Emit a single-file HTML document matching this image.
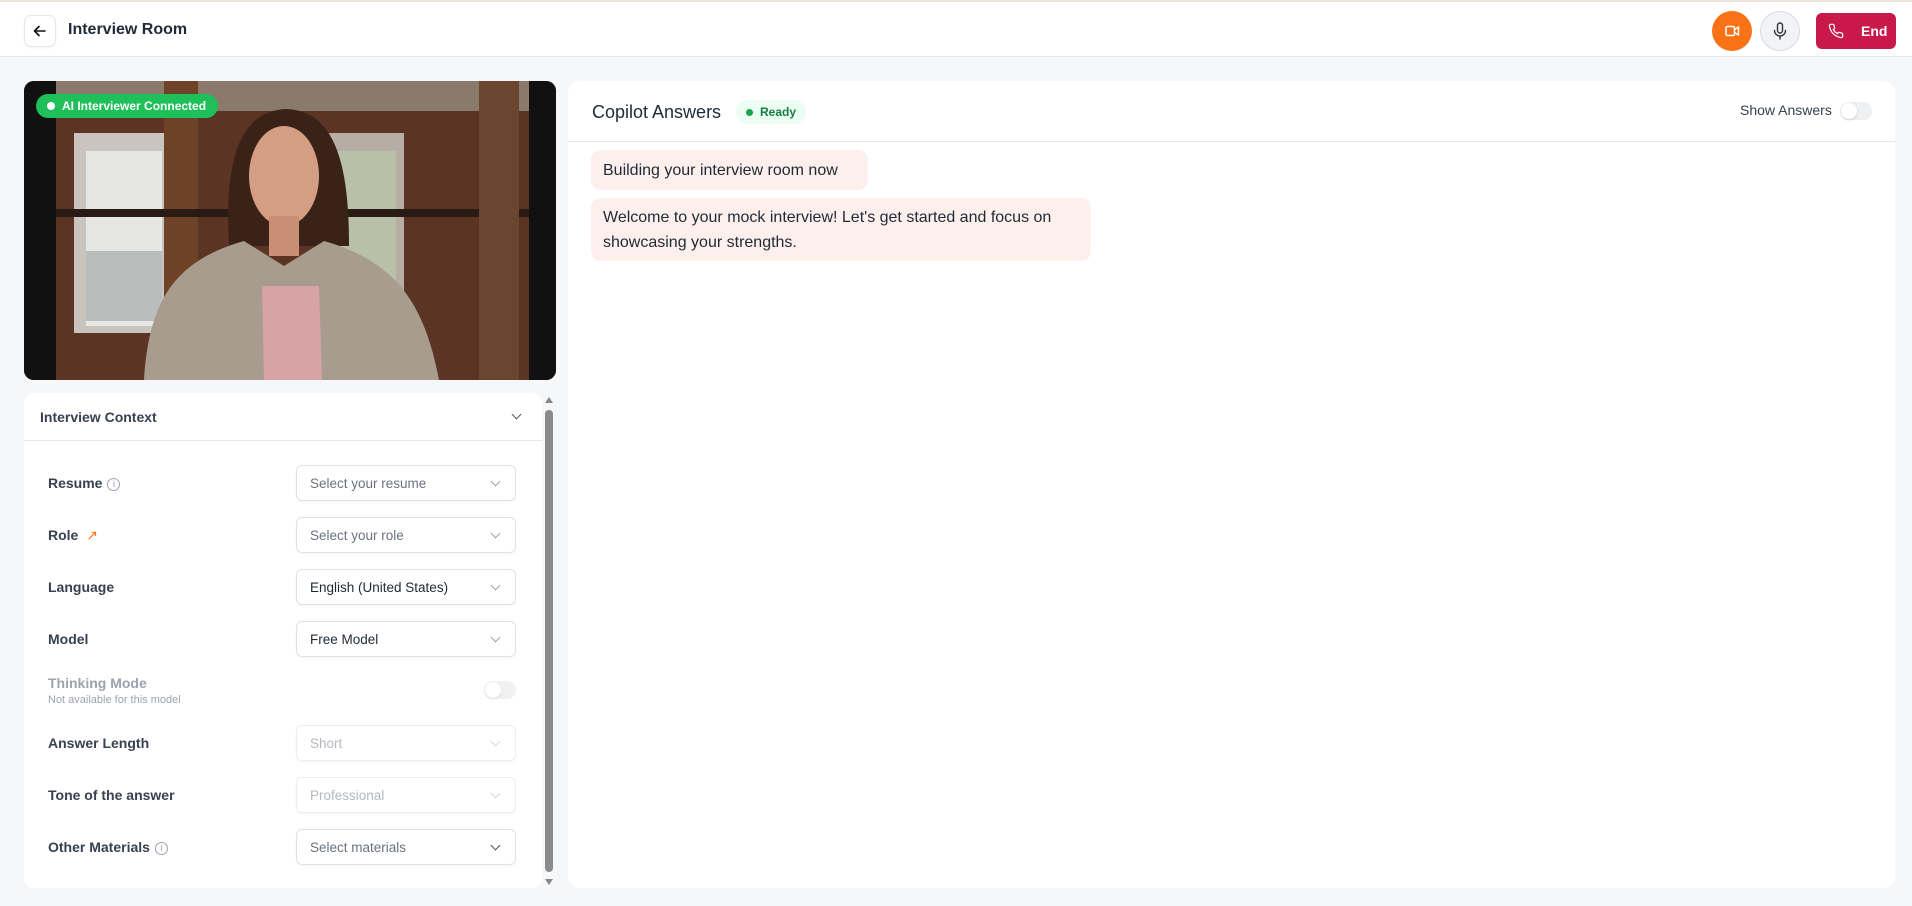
<!DOCTYPE html>
<html><head><meta charset="utf-8"><style>
*{box-sizing:border-box;margin:0;padding:0}
body{width:1912px;height:906px;background:#f6f7f9;font-family:"Liberation Sans",sans-serif;position:relative;overflow:hidden;color:#1f2937}
.hdr{position:absolute;left:0;top:0;width:1912px;height:57px;background:#fff;border-top:2px solid #ece6d8;border-bottom:1px solid #e5e7eb}
.back{position:absolute;left:24px;top:13px;width:32px;height:32px;border:1px solid #e5e7eb;border-radius:7px;box-shadow:0 1px 2px rgba(0,0,0,.05)}
.title{position:absolute;left:68px;top:19px;font-size:16px;font-weight:bold;color:#1f2937}
.cam{position:absolute;left:1712px;top:9px;width:40px;height:40px;border-radius:50%;background:#f97316}
.mic{position:absolute;left:1760px;top:9px;width:40px;height:40px;border-radius:50%;background:#f1f3f6;border:1px solid #d6dae0}
.end{position:absolute;left:1816px;top:11px;width:80px;height:36px;border-radius:6px;background:#c8194a;color:#fff;font-weight:bold;font-size:14px}
.video{position:absolute;left:24px;top:81px;width:532px;height:299px;border-radius:10px;overflow:hidden;background:#3a2218}
.badge{position:absolute;left:12px;top:13px;height:24px;padding:0 12px 0 26px;background:#1fc05a;border-radius:12px;color:#fff;font-size:12px;font-weight:bold;line-height:24px}
.badge:before{content:"";position:absolute;left:11px;top:8px;width:8px;height:8px;border-radius:50%;background:#fff}
.ctx{position:absolute;left:24px;top:393px;width:518px;height:495px;background:#fff;border-radius:10px}
.ctxh{height:48px;border-bottom:1px solid #e5e7eb;padding:16px 16px;font-size:14px;font-weight:bold;color:#374151}
.row{position:absolute;left:24px;width:470px;height:36px}
.lbl{position:absolute;left:0;top:10px;font-size:14px;font-weight:bold;color:#374151}
.sel{position:absolute;left:248px;top:0;width:220px;height:36px;border:1px solid #dfe2e6;border-radius:6px;font-size:13.5px;color:#6b7280;padding:10px 13px;box-shadow:0 1px 2px rgba(0,0,0,.04)}
.sel.dark{color:#1f2937}
.sel.dis{color:#b3b8bf;border-color:#eceef0}
.chev{position:absolute;right:16px;top:12px;width:7px;height:7px;border-right:1.3px solid #9ca3af;border-bottom:1.3px solid #9ca3af;transform:rotate(45deg)}
.info{display:inline-block;width:13px;height:13px;border:1px solid #9ca3af;border-radius:50%;font-size:9px;line-height:11px;text-align:center;color:#9ca3af;font-weight:normal;vertical-align:1px;margin-left:5px}
.sb{position:absolute;left:545px;top:410px;width:8px;height:462px;background:#8b8b8b;border-radius:4px}
.panel{position:absolute;left:568px;top:81px;width:1327px;height:807px;background:#fff;border-radius:12px}
.ph{height:61px;border-bottom:1px solid #e5e7eb;position:relative}
.ptitle{position:absolute;left:24px;top:21px;font-size:18px;color:#1f2937}
.ready{position:absolute;left:168px;top:19px;height:24px;padding:0 10px 0 24px;background:#ecfdf3;border-radius:12px;color:#15803d;font-size:12px;font-weight:bold;line-height:24px}
.ready:before{content:"";position:absolute;left:10px;top:9px;width:7px;height:7px;border-radius:50%;background:#16a34a}
.sa{position:absolute;left:1172px;top:21px;font-size:14px;color:#374151}
.tg{position:absolute;left:1272px;top:21px;width:32px;height:18px;border-radius:9px;background:#eef0f2}
.tg:before{content:"";position:absolute;left:1px;top:1px;width:16px;height:16px;border-radius:50%;background:#fff;box-shadow:0 1px 2px rgba(0,0,0,.15)}
.bub{position:absolute;left:23px;background:#fdf0ec;border-radius:10px;font-size:16px;color:#1f2937;padding:11px 12px;line-height:25px}
</style></head><body>
<div class="hdr">
 <div class="back"><svg width="30" height="30" viewBox="0 0 30 30"><path d="M20 15H10M14 10.5L9.5 15 14 19.5" stroke="#111" stroke-width="1.6" fill="none" stroke-linecap="round" stroke-linejoin="round"/></svg></div>
 <div class="title">Interview Room</div>
 <div class="cam"><svg width="40" height="40" viewBox="0 0 40 40"><rect x="14" y="15.5" width="8.5" height="9" rx="1.5" fill="none" stroke="#fff" stroke-width="1.5"/><path d="M22.5 18.5L26.5 16v8l-4-2.5" fill="none" stroke="#fff" stroke-width="1.5" stroke-linejoin="round"/></svg></div>
 <div class="mic"><svg width="38" height="38" viewBox="0 0 38 38"><rect x="16.5" y="11" width="5" height="10" rx="2.5" fill="none" stroke="#333" stroke-width="1.4"/><path d="M13.5 18.5a5.5 5.5 0 0 0 11 0M19 24v3" fill="none" stroke="#333" stroke-width="1.4" stroke-linecap="round"/></svg></div>
 <div class="end"><svg style="position:absolute;left:12px;top:10px" width="16" height="16" viewBox="0 0 24 24"><path d="M22 16.9v3a2 2 0 0 1-2.2 2 19.8 19.8 0 0 1-8.6-3.1 19.5 19.5 0 0 1-6-6A19.8 19.8 0 0 1 2.1 4.2 2 2 0 0 1 4.1 2h3a2 2 0 0 1 2 1.7c.1 1 .4 1.9.7 2.8a2 2 0 0 1-.5 2.1L8 9.9a16 16 0 0 0 6 6l1.3-1.3a2 2 0 0 1 2.1-.4c.9.3 1.8.6 2.8.7a2 2 0 0 1 1.7 2z" fill="none" stroke="#fff" stroke-width="1.8"/></svg><span style="position:absolute;left:45px;top:10px">End</span></div>
</div>

<div class="video">
<svg width="532" height="299" viewBox="0 0 532 299">
 <rect width="532" height="299" fill="#4a2a1e"/>
 <rect x="0" y="0" width="532" height="30" fill="#8a7a6c"/>
 <rect x="30" y="30" width="480" height="269" fill="#5b3424"/>
 <rect x="50" y="52" width="95" height="200" fill="#c9c4bd"/>
 <rect x="62" y="70" width="76" height="175" fill="#e6e6e4"/>
 <rect x="62" y="170" width="76" height="70" fill="#b9bdbb"/>
 <rect x="300" y="52" width="80" height="160" fill="#b6aea4"/>
 <rect x="310" y="70" width="62" height="140" fill="#b8c0a8"/>
 <rect x="140" y="0" width="34" height="299" fill="#6e4226"/>
 <rect x="30" y="128" width="480" height="8" fill="#2a1a14"/>
 <rect x="455" y="0" width="40" height="299" fill="#6a4630"/>
 <rect x="0" y="0" width="32" height="299" fill="#111"/>
 <rect x="505" y="0" width="27" height="299" fill="#111"/>
 <path d="M205 165 C200 80 215 30 262 28 C310 30 325 80 325 165 Z" fill="#3a2218"/>
 <ellipse cx="260" cy="95" rx="35" ry="50" fill="#d49e84"/>
 <rect x="245" y="135" width="30" height="40" fill="#c98f76"/>
 <path d="M120 299 C125 220 150 180 220 160 L260 185 L300 160 C370 180 400 220 415 299 Z" fill="#a89c8f"/>
 <path d="M238 205 L295 205 L298 299 L240 299 Z" fill="#d8a3a5"/>
</svg>
<div class="badge">AI Interviewer Connected</div>
</div>

<div class="ctx">
 <div class="ctxh">Interview Context<span style="position:absolute;right:22px;top:18px;width:7px;height:7px;border-right:1.3px solid #555;border-bottom:1.3px solid #555;transform:rotate(45deg)"></span></div>
 <div class="row" style="top:72px"><div class="lbl">Resume<span class="info">i</span></div><div class="sel">Select your resume<i class="chev"></i></div></div>
 <div class="row" style="top:124px"><div class="lbl">Role <span style="color:#f97316;font-weight:normal;margin-left:4px">↗</span></div><div class="sel">Select your role<i class="chev"></i></div></div>
 <div class="row" style="top:176px"><div class="lbl">Language</div><div class="sel dark">English (United States)<i class="chev"></i></div></div>
 <div class="row" style="top:228px"><div class="lbl">Model</div><div class="sel dark">Free Model<i class="chev"></i></div></div>
 <div class="row" style="top:280px"><div class="lbl" style="top:2px;color:#9ca3af">Thinking Mode</div><div style="position:absolute;left:0;top:21px;font-size:11px;color:#9ca3af">Not available for this model</div><div style="position:absolute;left:436px;top:8px;width:32px;height:18px;border-radius:9px;background:#f0f1f3"><div style="position:absolute;left:1px;top:1px;width:16px;height:16px;border-radius:50%;background:#fff;box-shadow:0 1px 2px rgba(0,0,0,.1)"></div></div></div>
 <div class="row" style="top:332px"><div class="lbl">Answer Length</div><div class="sel dis">Short<i class="chev" style="border-color:#d1d5db"></i></div></div>
 <div class="row" style="top:384px"><div class="lbl">Tone of the answer</div><div class="sel dis">Professional<i class="chev" style="border-color:#d1d5db"></i></div></div>
 <div class="row" style="top:436px"><div class="lbl">Other Materials<span class="info">i</span></div><div class="sel">Select materials<i class="chev" style="border-color:#555"></i></div></div>
</div>
<div style="position:absolute;left:545px;top:397px;width:0;height:0;border:4px solid transparent;border-bottom:6px solid #888;border-top:0"></div>
<div class="sb"></div>
<div style="position:absolute;left:545px;top:879px;width:0;height:0;border:4px solid transparent;border-top:6px solid #888;border-bottom:0"></div>

<div class="panel">
 <div class="ph"><div class="ptitle">Copilot Answers</div><div class="ready">Ready</div><div class="sa">Show Answers</div><div class="tg"></div></div>
 <div class="bub" style="top:69px;width:277px;height:40px;padding-top:8px">Building your interview room now</div>
 <div class="bub" style="top:117px;width:500px;height:63px;padding-top:7px">Welcome to your mock interview! Let's get started and focus on showcasing your strengths.</div>
</div>
</body></html>
